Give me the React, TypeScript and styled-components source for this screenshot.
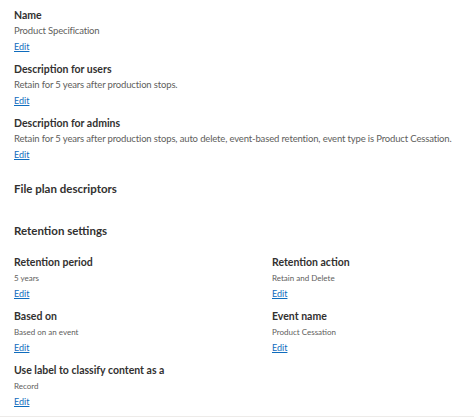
import React from "react";
import styled, { createGlobalStyle } from "styled-components";

const Global = createGlobalStyle`
  html, body { margin: 0; padding: 0; background: #ffffff; }
  body { font-family: Lato, "Open Sans", sans-serif; }
`;

const Page = styled.div`
  width: 474px;
  height: 417px;
  box-sizing: border-box;
  display: flex;
  flex-direction: column;
  background: #fff;
  overflow: hidden;
`;

const Content = styled.div`
  flex: 1;
  padding: 7px 14px 0 14px;
  display: flex;
  flex-direction: column;
`;

const Field = styled.div`
  display: flex;
  flex-direction: column;
  margin-bottom: 6px;
`;

const Label = styled.div`
  font-size: 10.5px;
  font-weight: 700;
  color: #323130;
  line-height: 16px;
  white-space: nowrap;
`;

const Value = styled.div<{ $small?: boolean }>`
  font-size: ${(p) => (p.$small ? "8px" : "9.5px")};
  letter-spacing: ${(p) => (p.$small ? "0" : "-0.15px")};
  color: #605e5c;
  line-height: 16px;
  white-space: nowrap;
`;

const EditLink = styled.a`
  font-size: 9px;
  color: #0f6cbd;
  text-decoration: underline;
  line-height: 16px;
  cursor: pointer;
  align-self: flex-start;
`;

const Heading = styled.div<{ $gap: number }>`
  font-size: 11.5px;
  font-weight: 700;
  color: #323130;
  line-height: 18px;
  margin-top: ${(p) => p.$gap}px;
`;

const Grid = styled.div`
  display: grid;
  grid-template-columns: 258px 1fr;
  margin-top: 14px;
`;

const Footer = styled.div`
  height: 7px;
  background: #f3f2f1;
  border-top: 1px solid #edebe9;
`;

function FieldBlock({ label, value, small }: { label: string; value: string; small?: boolean }) {
  return (
    <Field>
      <Label>{label}</Label>
      <Value $small={small}>{value}</Value>
      <EditLink>Edit</EditLink>
    </Field>
  );
}

export default function App() {
  return (
    <>
      <Global />
      <Page>
        <Content>
          <FieldBlock label="Name" value="Product Specification" />
          <FieldBlock label="Description for users" value="Retain for 5 years after production stops." />
          <FieldBlock
            label="Description for admins"
            value="Retain for 5 years after production stops, auto delete, event-based retention, event type is Product Cessation."
          />
          <Heading $gap={11}>File plan descriptors</Heading>
          <Heading $gap={24}>Retention settings</Heading>
          <Grid>
            <FieldBlock label="Retention period" value="5 years" small />
            <FieldBlock label="Retention action" value="Retain and Delete" small />
            <FieldBlock label="Based on" value="Based on an event" small />
            <FieldBlock label="Event name" value="Product Cessation" small />
            <FieldBlock label="Use label to classify content as a" value="Record" small />
          </Grid>
        </Content>
        <Footer />
      </Page>
    </>
  );
}
